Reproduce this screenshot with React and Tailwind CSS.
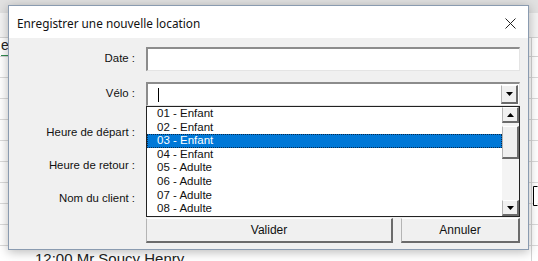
import React from 'react';

const velos = [
  '01 - Enfant',
  '02 - Enfant',
  '03 - Enfant',
  '04 - Enfant',
  '05 - Adulte',
  '06 - Adulte',
  '07 - Adulte',
  '08 - Adulte',
];

const sunken =
  'bg-white border-t-2 border-l-2 border-b border-r border-t-[#8c8c8c] border-l-[#8c8c8c] border-b-[#e4e4e4] border-r-[#e4e4e4]';

const raised =
  'bg-[#f0f0f0] border-t border-l border-b-2 border-r-2 border-t-white border-l-[#b4b4b4] border-b-[#6b6b6b] border-r-[#6b6b6b]';

function Arrow({ down }) {
  return (
    <svg width="7" height="4" viewBox="0 0 7 4">
      <path d={down ? 'M0 0h7L3.5 4z' : 'M0 4h7L3.5 0z'} fill="#000" />
    </svg>
  );
}

function Label({ children }) {
  return (
    <div className="w-[127px] shrink-0 text-right pr-[1px] text-[11.4px] text-[#111]">{children}</div>
  );
}

function Sheet() {
  const rows = Array.from({ length: 10 });
  return (
    <div className="absolute inset-0 flex flex-col">
      <div className="h-[13px] shrink-0 bg-[#e1e1e1]" />
      <div className="h-[25px] shrink-0 bg-[#f3f3f3] border-b border-[#d4d4d4]" />
      <div className="h-[19px] shrink-0 bg-white border-b border-[#d4d4d4] flex items-center text-[14px] text-[#222] leading-none pl-[1px]">
        <span className="w-[8px] border-b border-[#2f8a4f] pb-[3px]">e</span>
      </div>
      {rows.map((_, i) => (
        <div key={i} className="h-[21px] shrink-0 border-b border-[#dadada] bg-white flex items-center">
          {i === 9 && (
            <span className="pl-[35px] text-[15px] leading-none text-[#222] translate-y-[2px]">
              12:00 Mr Soucy Henry
            </span>
          )}
        </div>
      ))}
      <div className="absolute top-[38px] bottom-0 left-[531px] w-px bg-[#d4d4d4]" />
    </div>
  );
}

export default function App() {
  return (
    <div className="relative w-[538px] h-[261px] overflow-hidden bg-white" style={{ fontFamily: '"Liberation Sans", Arial, sans-serif' }}>
      <Sheet />

      <div className="absolute left-[8px] top-[5px] w-[521px] h-[245px] border border-[#8a9bb0] bg-[#f0f0f0] flex flex-col shadow-[0_2px_10px_rgba(0,0,0,0.28)]">
        <div className="h-[32px] shrink-0 bg-white flex items-center justify-between pl-[8px] pr-[12px] pt-[3px]">
          <span className="text-[11.8px] text-[#111]" style={{ fontFamily: '"Noto Sans", "Open Sans", sans-serif' }}>
            Enregistrer une nouvelle location
          </span>
          <svg width="11" height="11" viewBox="0 0 11 11">
            <path d="M0.5 0.5L10.5 10.5M10.5 0.5L0.5 10.5" stroke="#222" strokeWidth="1" />
          </svg>
        </div>

        <div className="flex-1 flex flex-col pr-[8px] pt-[9px]">
          <div className="flex items-center gap-[10px] h-[24px]">
            <Label>Date :</Label>
            <div className={`flex-1 h-full ${sunken}`} />
          </div>

          <div className="flex items-center gap-[10px] h-[24px] mt-[11px]">
            <Label>Vélo :</Label>
            <div className="relative flex-1 h-full">
              <div className={`h-full flex items-center ${sunken}`}>
                <div className="ml-[10px] w-px h-[14px] bg-black" />
                <div className={`ml-auto mr-[1px] w-[17px] h-[19px] flex items-center justify-center ${raised}`}>
                  <Arrow down />
                </div>
              </div>

              <div className="absolute left-0 right-0 top-[24px] h-[111px] bg-white border border-[#222] flex z-10">
                <div className="flex-1 flex flex-col">
                  {velos.map((v, i) => (
                    <div
                      key={v}
                      className={`h-[13.6px] flex items-center pl-[10px] text-[11.5px] leading-none ${
                        i === 2
                          ? 'bg-[#0078d7] text-white outline-1 outline-dotted outline-[#0b2a4a] -outline-offset-1'
                          : 'text-[#111]'
                      }`}
                    >
                      {v}
                    </div>
                  ))}
                </div>
                <div className="w-[17px] bg-[#f4f4f4] flex flex-col">
                  <div className={`h-[16px] flex items-center justify-center ${raised}`}>
                    <Arrow />
                  </div>
                  <div className={`h-[33px] mt-[3px] ${raised}`} />
                  <div className="flex-1" />
                  <div className={`h-[16px] flex items-center justify-center ${raised}`}>
                    <Arrow down />
                  </div>
                </div>
              </div>
            </div>
          </div>

          <div className="flex items-center gap-[10px] h-[24px] mt-[15px]">
            <Label>Heure de départ :</Label>
            <div className={`flex-1 h-full ${sunken}`} />
          </div>

          <div className="flex items-center gap-[10px] h-[24px] mt-[9px]">
            <Label>Heure de retour :</Label>
            <div className={`flex-1 h-full ${sunken}`} />
          </div>

          <div className="flex items-center gap-[10px] h-[24px] mt-[9px]">
            <Label>Nom du client :</Label>
            <div className={`flex-1 h-full ${sunken}`} />
          </div>

          <div className="flex gap-[8px] h-[25px] mt-[7px] pl-[137px]">
            <button className={`w-[247px] text-[12px] text-[#111] ${raised}`}>Valider</button>
            <button className={`flex-1 text-[12px] text-[#111] ${raised}`}>Annuler</button>
          </div>
        </div>
      </div>

      <svg className="absolute left-[508px] top-[137px]" width="12" height="19" viewBox="0 0 12 19">
        <path d="M0.5 0.5V16.5L4.5 12.5L7.5 18.5L9.5 17.5L6.5 11.5H11.5Z" fill="#fff" stroke="#000" strokeWidth="1" strokeLinejoin="round" />
      </svg>
      <svg className="absolute left-[533px] top-[186px]" width="5" height="20" viewBox="0 0 5 20">
        <path d="M4.5 0.5H0.5V19.5H4.5" fill="#fff" stroke="#000" strokeWidth="1" />
      </svg>
    </div>
  );
}
